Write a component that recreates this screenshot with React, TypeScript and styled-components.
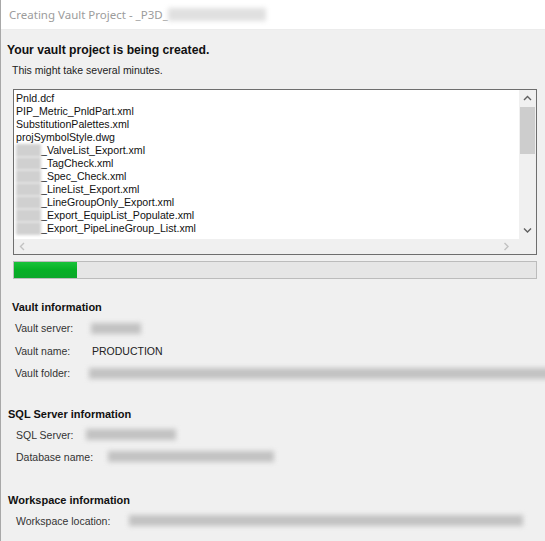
import styled, { createGlobalStyle } from 'styled-components';

const GlobalStyle = createGlobalStyle`
  html, body {
    margin: 0;
    padding: 0;
    background: #f0f0f0;
  }
  body {
    font-family: "Liberation Sans", Arial, sans-serif;
  }
`;

const Window = styled.div`
  width: 545px;
  height: 541px;
  box-sizing: border-box;
  border-left: 1px solid #a8a8a8;
  background: #f0f0f0;
  overflow: hidden;
  display: flex;
  flex-direction: column;
`;

const TitleBar = styled.div`
  height: 30px;
  flex-shrink: 0;
  display: flex;
  align-items: center;
  padding-left: 8px;
  background: #ffffff;
  border-bottom: 1px solid #ececec;
  box-sizing: border-box;
  font-family: "Noto Sans", sans-serif;
  font-size: 11.5px;
  color: #9c9c9c;
  white-space: nowrap;
`;

const Body = styled.div`
  padding: 13px 8px 0 6px;
  display: flex;
  flex-direction: column;
`;

const Heading = styled.div`
  font-size: 12.2px;
  font-weight: bold;
  line-height: 15px;
  color: #111;
`;

const SubText = styled.div`
  margin: 6px 0 0 5px;
  font-size: 10.5px;
  line-height: 13px;
  color: #222;
`;

const ListBox = styled.div`
  margin: 12px 0 0 6px;
  width: 524px;
  height: 166px;
  box-sizing: border-box;
  border: 1px solid #6e6e6e;
  background: #fff;
  display: grid;
  grid-template-columns: 1fr 17px;
  grid-template-rows: 1fr 15px;
`;

const Items = styled.div`
  padding: 2px 0 0 2px;
  overflow: hidden;
`;

const Item = styled.div`
  display: flex;
  height: 13px;
  line-height: 13px;
  font-size: 10.6px;
  color: #111;
  white-space: nowrap;
`;

const Redacted = styled.span<{ $w: number; $h?: number; $tone?: string }>`
  display: inline-block;
  flex-shrink: 0;
  width: ${(p) => p.$w}px;
  height: ${(p) => p.$h ?? 11}px;
  background: ${(p) => p.$tone ?? '#c2c2c2'};
  filter: blur(2.5px);
`;

const PrefixBlur = styled.span`
  display: inline-block;
  flex-shrink: 0;
  width: 25px;
  height: 13px;
  background: #d0d0d0;
  filter: blur(1.5px);
`;

const VScroll = styled.div`
  background: #f0f0f0;
  display: flex;
  flex-direction: column;
  align-items: center;
`;

const ArrowCell = styled.div`
  height: 17px;
  width: 17px;
  display: flex;
  align-items: center;
  justify-content: center;
  flex-shrink: 0;
`;

const Track = styled.div`
  flex: 1;
  width: 100%;
  display: flex;
  justify-content: center;
`;

const Thumb = styled.div`
  width: 15px;
  height: 47px;
  background: #cdcdcd;
`;

const HScroll = styled.div`
  background: #f0f0f0;
  display: flex;
  align-items: center;
  justify-content: space-between;
  padding: 0 4px 0 0;
`;

const Corner = styled.div`
  background: #f0f0f0;
`;

const Progress = styled.div`
  margin: 6px 0 0 6px;
  width: 524px;
  height: 18px;
  box-sizing: border-box;
  border: 1px solid #bcbcbc;
  background: #e6e6e6;
`;

const ProgressFill = styled.div`
  height: 100%;
  background: linear-gradient(to bottom, #19c33a, #06b025 50%, #0ba82a);
`;

const Section = styled.div<{ $top: number; $indent?: number }>`
  margin-top: ${(p) => p.$top}px;
  padding-left: ${(p) => p.$indent ?? 1}px;
`;

const SectionTitle = styled.div`
  font-size: 11px;
  font-weight: bold;
  line-height: 14px;
  color: #111;
`;

const Rows = styled.div<{ $offset?: number }>`
  margin: 3px 0 0 ${(p) => p.$offset ?? 8}px;
`;

const Row = styled.div<{ $h?: number }>`
  display: flex;
  align-items: center;
  height: ${(p) => p.$h ?? 22.5}px;
  font-size: 10.5px;
  color: #333;
  white-space: nowrap;
`;

const Label = styled.span<{ $width?: number; $gap?: number }>`
  flex-shrink: 0;
  width: ${(p) => (p.$width ? `${p.$width}px` : 'auto')};
  margin-right: ${(p) => p.$gap ?? 0}px;
`;

const Value = styled.span`
  color: #222;
`;

const Chevron = ({ dir, color }: { dir: 'up' | 'down' | 'left' | 'right'; color: string }) => {
  const pts = {
    up: '1,5 4.5,1.5 8,5',
    down: '1,1.5 4.5,5 8,1.5',
    left: '5,1 1.5,4.5 5,8',
    right: '1.5,1 5,4.5 1.5,8',
  }[dir];
  const vertical = dir === 'up' || dir === 'down';
  return (
    <svg width={vertical ? 9 : 7} height={vertical ? 7 : 9} viewBox={vertical ? '0 0 9 7' : '0 0 7 9'}>
      <polyline points={pts} fill="none" stroke={color} strokeWidth="1.4" />
    </svg>
  );
};

const files = [
  { name: 'Pnld.dcf' },
  { name: 'PIP_Metric_PnldPart.xml' },
  { name: 'SubstitutionPalettes.xml' },
  { name: 'projSymbolStyle.dwg' },
  { name: '_ValveList_Export.xml', hidden: true },
  { name: '_TagCheck.xml', hidden: true },
  { name: '_Spec_Check.xml', hidden: true },
  { name: '_LineList_Export.xml', hidden: true },
  { name: '_LineGroupOnly_Export.xml', hidden: true },
  { name: '_Export_EquipList_Populate.xml', hidden: true },
  { name: '_Export_PipeLineGroup_List.xml', hidden: true },
];

const App = () => {
  const progress = 63;

  return (
    <>
      <GlobalStyle />
      <Window>
        <TitleBar>
          Creating Vault Project - _P3D_
          <Redacted $w={98} $h={13} $tone="#e0e0e0" />
        </TitleBar>
        <Body>
          <Heading>Your vault project is being created.</Heading>
          <SubText>This might take several minutes.</SubText>

          <ListBox>
            <Items>
              {files.map((f) => (
                <Item key={f.name}>
                  {f.hidden && <PrefixBlur />}
                  {f.name}
                </Item>
              ))}
            </Items>
            <VScroll>
              <ArrowCell>
                <Chevron dir="up" color="#606060" />
              </ArrowCell>
              <Track>
                <Thumb />
              </Track>
              <ArrowCell>
                <Chevron dir="down" color="#606060" />
              </ArrowCell>
            </VScroll>
            <HScroll>
              <ArrowCell>
                <Chevron dir="left" color="#c2c2c2" />
              </ArrowCell>
              <ArrowCell>
                <Chevron dir="right" color="#c2c2c2" />
              </ArrowCell>
            </HScroll>
            <Corner />
          </ListBox>

          <Progress>
            <ProgressFill style={{ width: `${progress}px` }} />
          </Progress>

          <Section $top={21} $indent={5}>
            <SectionTitle>Vault information</SectionTitle>
            <Rows $offset={3}>
              <Row>
                <Label $width={76}>Vault server:</Label>
                <Redacted $w={50} />
              </Row>
              <Row>
                <Label $width={77}>Vault name:</Label>
                <Value>PRODUCTION</Value>
              </Row>
              <Row>
                <Label $width={74}>Vault folder:</Label>
                <Redacted $w={470} />
              </Row>
            </Rows>
          </Section>

          <Section $top={22}>
            <SectionTitle>SQL Server information</SectionTitle>
            <Rows>
              <Row $h={22}>
                <Label $gap={13}>SQL Server:</Label>
                <Redacted $w={90} />
              </Row>
              <Row $h={22}>
                <Label $gap={15}>Database name:</Label>
                <Redacted $w={166} />
              </Row>
            </Rows>
          </Section>

          <Section $top={25}>
            <SectionTitle>Workspace information</SectionTitle>
            <Rows>
              <Row $h={22}>
                <Label $gap={19}>Workspace location:</Label>
                <Redacted $w={394} />
              </Row>
            </Rows>
          </Section>
        </Body>
      </Window>
    </>
  );
};

export default App;
